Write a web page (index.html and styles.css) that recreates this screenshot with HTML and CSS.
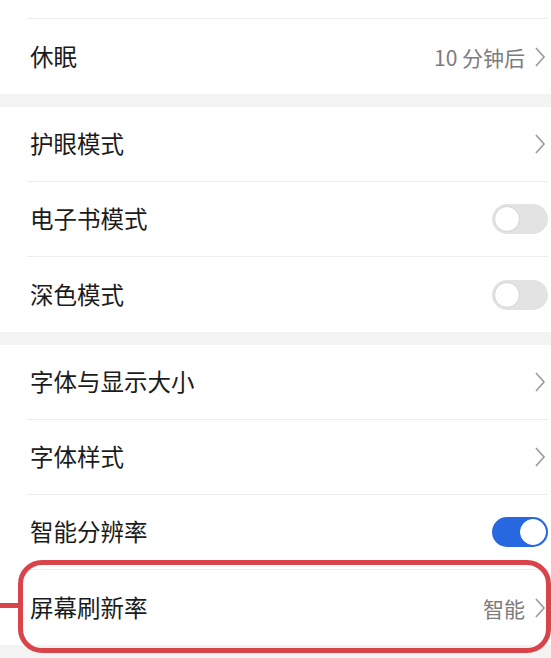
FILE: index.html
```html
<!DOCTYPE html>
<html>
  <head>
    <title>显示设置</title>
    <link rel="stylesheet" href="styles.css">
  </head>
  <body>
    <div class="page">
      <div class="group">
        <div class="row stub"></div>
        <div class="row last">
          <span class="label">休眠</span>
          <span class="value">10 分钟后</span>
          <svg class="chev" width="12" height="20" viewBox="0 0 12 20"><polyline points="2,1 10,10 2,19" /></svg>
        </div>
      </div>

      <div class="group">
        <div class="row">
          <span class="label">护眼模式</span>
          <svg class="chev" width="12" height="20" viewBox="0 0 12 20"><polyline points="2,1 10,10 2,19" /></svg>
        </div>
        <div class="row">
          <span class="label">电子书模式</span>
          <span class="switch"><span class="knob"></span></span>
        </div>
        <div class="row last">
          <span class="label">深色模式</span>
          <span class="switch"><span class="knob"></span></span>
        </div>
      </div>

      <div class="group">
        <div class="row">
          <span class="label">字体与显示大小</span>
          <svg class="chev" width="12" height="20" viewBox="0 0 12 20"><polyline points="2,1 10,10 2,19" /></svg>
        </div>
        <div class="row">
          <span class="label">字体样式</span>
          <svg class="chev" width="12" height="20" viewBox="0 0 12 20"><polyline points="2,1 10,10 2,19" /></svg>
        </div>
        <div class="row">
          <span class="label">智能分辨率</span>
          <span class="switch on"><span class="knob"></span></span>
        </div>
        <div class="row last">
          <span class="label">屏幕刷新率</span>
          <span class="value">智能</span>
          <svg class="chev" width="12" height="20" viewBox="0 0 12 20"><polyline points="2,1 10,10 2,19" /></svg>
        </div>
      </div>

      <!-- annotation over the refresh rate row -->
      <div class="mark"></div>
      <div class="mark-line"></div>
    </div>
  </body>
</html>
```

FILE: styles.css
```css
body {
  margin: 0;
  background: #f3f3f3;
  font-family: "Noto Sans CJK SC", "Noto Sans", sans-serif;
  color: #1b1b1b;
}

.page {
  position: relative;
  width: 551px;
  height: 658px;
  overflow: hidden;
}

.group {
  background: #fff;
  margin-bottom: 13px;
}

.row {
  display: flex;
  align-items: center;
  height: 74px;
  margin: 0 3px 0 27px;
  padding-left: 3px;
  border-bottom: 1px solid #ececec;
}

.row.stub {
  height: 18px;
}

.row.last {
  border-bottom: none;
  height: 75px;
}

.label {
  flex: 1;
  font-size: 23.5px;
  line-height: 1;
}

.value {
  font-size: 21px;
  color: #7c7c7c;
  margin-right: 9px;
}

.chev {
  margin-right: 2px;
}

.chev polyline {
  fill: none;
  stroke: #9a9a9a;
  stroke-width: 1.6;
}

.switch {
  position: relative;
  width: 56px;
  height: 30px;
  border-radius: 15px;
  background: #e3e3e3;
}

.switch .knob {
  position: absolute;
  top: 2px;
  left: 2px;
  width: 24px;
  height: 24px;
  border-radius: 50%;
  background: #fff;
  border: 1px solid #d4d4d4;
}

.switch.on {
  background: #2767e0;
}

.switch.on .knob {
  left: auto;
  right: 2px;
  border-color: #fff;
}

.mark {
  position: absolute;
  left: 18px;
  top: 560px;
  width: 523px;
  height: 83px;
  border: 5px solid #d9444b;
  border-radius: 24px;
}

.mark-line {
  position: absolute;
  left: 0;
  top: 603px;
  width: 19px;
  height: 5px;
  background: #d9444b;
}
```
